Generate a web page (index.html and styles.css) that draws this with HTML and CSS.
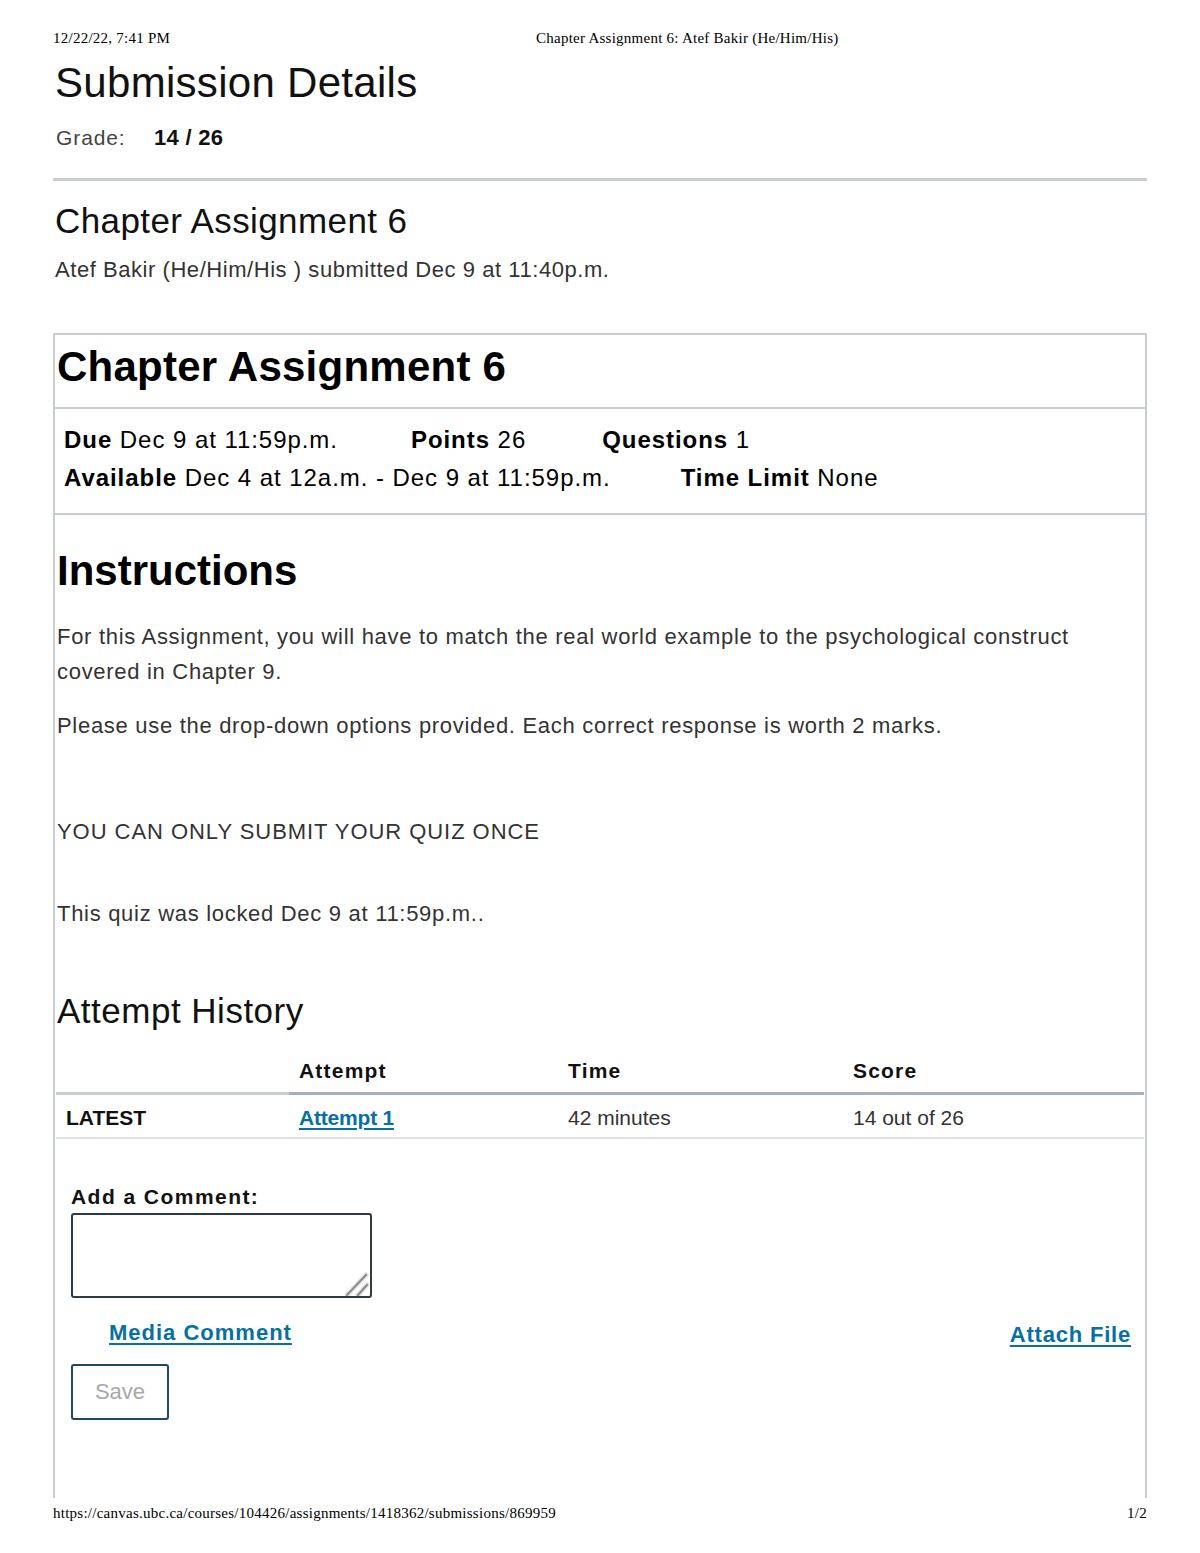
FILE: index.html
```html
<!DOCTYPE html>
<html lang="en">
<head>
<meta charset="utf-8">
<title>Chapter Assignment 6: Atef Bakir (He/Him/His)</title>
<link rel="stylesheet" href="styles.css">
</head>
<body>
<div class="page">
  <div class="print-head">
    <span class="print-date">12/22/22, 7:41 PM</span>
    <span class="print-title">Chapter Assignment 6: Atef Bakir (He/Him/His)</span>
  </div>

  <h1 class="page-title">Submission Details</h1>
  <div class="grade-row"><span class="grade-label">Grade:</span><span class="grade-value">14 / 26</span></div>
  <div class="rule"></div>

  <h2 class="sub-title">Chapter Assignment 6</h2>
  <div class="submitted">Atef Bakir (He/Him/His ) submitted Dec 9 at 11:40p.m.</div>

  <div class="quiz-box">
    <div class="quiz-head">
      <h2 class="quiz-title">Chapter Assignment 6</h2>
    </div>
    <div class="quiz-details">
      <div class="detail-row">
        <span class="detail"><b>Due</b> Dec 9 at 11:59p.m.</span>
        <span class="detail"><b>Points</b> 26</span>
        <span class="detail q"><b>Questions</b> 1</span>
      </div>
      <div class="detail-row">
        <span class="detail"><b>Available</b> Dec 4 at 12a.m. - Dec 9 at 11:59p.m.</span>
        <span class="detail tl"><b>Time Limit</b> None</span>
      </div>
    </div>
    <div class="quiz-body">
      <h2 class="section-title">Instructions</h2>
      <p class="para p1">For this Assignment, you will have to match the real world example to the psychological construct covered in Chapter 9.</p>
      <p class="para p2">Please use the drop-down options provided. Each correct response is worth 2 marks.</p>
      <p class="para p3">YOU CAN ONLY SUBMIT YOUR QUIZ ONCE</p>
      <p class="para p4">This quiz was locked Dec 9 at 11:59p.m..</p>

      <h3 class="history-title">Attempt History</h3>
      <table class="history">
        <thead>
          <tr>
            <th class="c1"></th>
            <th class="c2">Attempt</th>
            <th class="c3">Time</th>
            <th class="c4">Score</th>
          </tr>
        </thead>
        <tbody>
          <tr>
            <td class="latest">LATEST</td>
            <td><a href="#" class="link attempt-link">Attempt 1</a></td>
            <td>42 minutes</td>
            <td>14 out of 26</td>
          </tr>
        </tbody>
      </table>

      <div class="comment">
        <label class="comment-label" for="cmt">Add a Comment:</label>
        <div class="comment-wrap">
          <textarea id="cmt" class="comment-box"></textarea>
          <svg class="grip" width="24" height="24" viewBox="0 0 24 24" aria-hidden="true">
            <g stroke-linecap="square">
              <line x1="2" y1="23" x2="21" y2="3" stroke="#e4e4e4" stroke-width="5"/>
              <line x1="13" y1="23" x2="22" y2="13" stroke="#e4e4e4" stroke-width="5"/>
              <line x1="2" y1="23" x2="21" y2="3" stroke="#8a8a8a" stroke-width="2"/>
              <line x1="13" y1="23" x2="22" y2="13" stroke="#8a8a8a" stroke-width="2"/>
            </g>
          </svg>
        </div>
        <div class="comment-links">
          <a href="#" class="link big-link media">Media Comment</a>
          <a href="#" class="link big-link attach">Attach File</a>
        </div>
        <button class="save-btn" type="button">Save</button>
      </div>
    </div>
  </div>

  <div class="print-foot">
    <span>https://canvas.ubc.ca/courses/104426/assignments/1418362/submissions/869959</span>
    <span>1/2</span>
  </div>
</div>
</body>
</html>
```

FILE: styles.css
```css
html, body {
  margin: 0;
  padding: 0;
  background: #fff;
}
body {
  font-family: "Liberation Sans", Arial, sans-serif;
  color: #2d2d2d;
}
.page {
  width: 1094px;
  padding: 0 53px;
}
.print-head {
  display: flex;
  padding-top: 29px;
  font-family: "Liberation Serif", "Times New Roman", serif;
  font-size: 15px;
  line-height: 18px;
  color: #000;
  letter-spacing: 0.25px;
}
.print-date {
  width: 483px;
}
.page-title {
  margin: 12px 0 0 2px;
  font-size: 42px;
  line-height: 48px;
  font-weight: normal;
  color: #111;
  letter-spacing: 0.3px;
}
.grade-row {
  margin-top: 16px;
  line-height: 30px;
  display: flex;
  align-items: baseline;
}
.grade-label {
  font-size: 21px;
  color: #444;
  margin-left: 3px;
  width: 98px;
  letter-spacing: 0.9px;
}
.grade-value {
  font-size: 22px;
  font-weight: bold;
  color: #111;
  letter-spacing: 0.3px;
}
.rule {
  margin-top: 25px;
  height: 3px;
  background: #c7cdd1;
}
.sub-title {
  margin: 20px 0 0 2px;
  font-size: 35px;
  line-height: 40px;
  font-weight: normal;
  color: #111;
  letter-spacing: 0.4px;
}
.submitted {
  margin: 15px 0 0 2px;
  font-size: 22px;
  line-height: 28px;
  letter-spacing: 0.55px;
  color: #333;
}
.quiz-box {
  margin-top: 49px;
  border: 2px solid #c7cdd1;
  border-bottom: none;
}
.quiz-head {
  padding: 8px 2px 16px;
  border-bottom: 2px solid #c7cdd1;
}
.quiz-title {
  margin: 0;
  font-size: 42px;
  line-height: 48px;
  font-weight: bold;
  color: #000;
  letter-spacing: 0.25px;
}
.quiz-details {
  padding: 12px 9px 16px;
  border-bottom: 2px solid #c7cdd1;
  font-size: 24px;
  line-height: 38px;
  color: #000;
  letter-spacing: 0.95px;
}
.detail-row {
  display: flex;
  gap: 73px;
}
.detail.q {
  margin-left: 3px;
}
.detail.tl {
  margin-left: -3px;
}
.quiz-body {
  padding: 32px 14px 78px 2px;
}
.section-title {
  margin: 0;
  font-size: 42px;
  line-height: 48px;
  font-weight: bold;
  color: #000;
}
.para {
  margin: 0;
  font-size: 22px;
  line-height: 35px;
  color: #333;
  letter-spacing: 0.7px;
  padding-right: 30px;
}
.p1 { margin-top: 24px; }
.p2 { margin-top: 19px; }
.p3 { margin-top: 71px; letter-spacing: 0.95px; }
.p4 { margin-top: 47px; }
.history-title {
  margin: 60px 0 0;
  font-size: 35px;
  line-height: 40px;
  font-weight: normal;
  color: #111;
  letter-spacing: 0.5px;
}
.history {
  margin: 18px 0 0 -1px;
  width: calc(100% + 14px);
  border-collapse: collapse;
  font-size: 21px;
  line-height: 24px;
  color: #333;
}
.history th {
  text-align: left;
  font-weight: bold;
  color: #111;
  padding: 10px 10px 9px;
  border-bottom: 3px solid #a5afb5;
  letter-spacing: 1.2px;
}
.history th.c1 {
  border-bottom-color: #c7cdd1;
  width: 213px;
}
.history th.c2 { width: 249px; }
.history th.c3 { width: 265px; }
.history td {
  padding: 11px 10px 7px;
  border-bottom: 2px solid #dde1e4;
}
.history td.latest {
  font-weight: bold;
  color: #111;
}
.link {
  color: #0770a3;
  font-weight: bold;
  text-decoration: underline;
  text-decoration-thickness: 2px;
  text-underline-offset: 3px;
}
.attempt-link {
  font-size: 21px;
  letter-spacing: -0.2px;
}
.comment {
  margin-top: 46px;
  padding-left: 14px;
  display: flex;
  flex-direction: column;
  align-items: flex-start;
}
.comment-label {
  font-size: 21px;
  line-height: 24px;
  font-weight: bold;
  color: #111;
  letter-spacing: 1.45px;
}
.comment-wrap {
  position: relative;
  margin-top: 4px;
  width: 301px;
  height: 85px;
}
.comment-box {
  display: block;
  width: 301px;
  height: 85px;
  box-sizing: border-box;
  border: 2px solid #2d3b45;
  border-radius: 3px;
  resize: none;
  padding: 4px;
  font-family: inherit;
  margin: 0;
}
.grip {
  position: absolute;
  right: 3px;
  bottom: 2px;
}
.comment-links {
  margin-top: 21px;
  width: 100%;
  display: flex;
  justify-content: space-between;
  align-items: baseline;
}
.big-link {
  font-size: 22px;
  line-height: 28px;
  letter-spacing: 1px;
}
.media {
  margin-left: 38px;
}
.attach {
  position: relative;
  top: 2px;
  letter-spacing: 0.8px;
}
.save-btn {
  margin-top: 17px;
  width: 98px;
  height: 56px;
  background: #fff;
  border: 2px solid #1d4a62;
  border-radius: 3px;
  font-family: inherit;
  font-size: 22px;
  color: #a8a8a8;
  padding: 0;
}
.print-foot {
  display: flex;
  justify-content: space-between;
  padding-top: 6px;
  font-family: "Liberation Serif", "Times New Roman", serif;
  font-size: 15px;
  line-height: 18px;
  color: #000;
  letter-spacing: 0.25px;
}
```
